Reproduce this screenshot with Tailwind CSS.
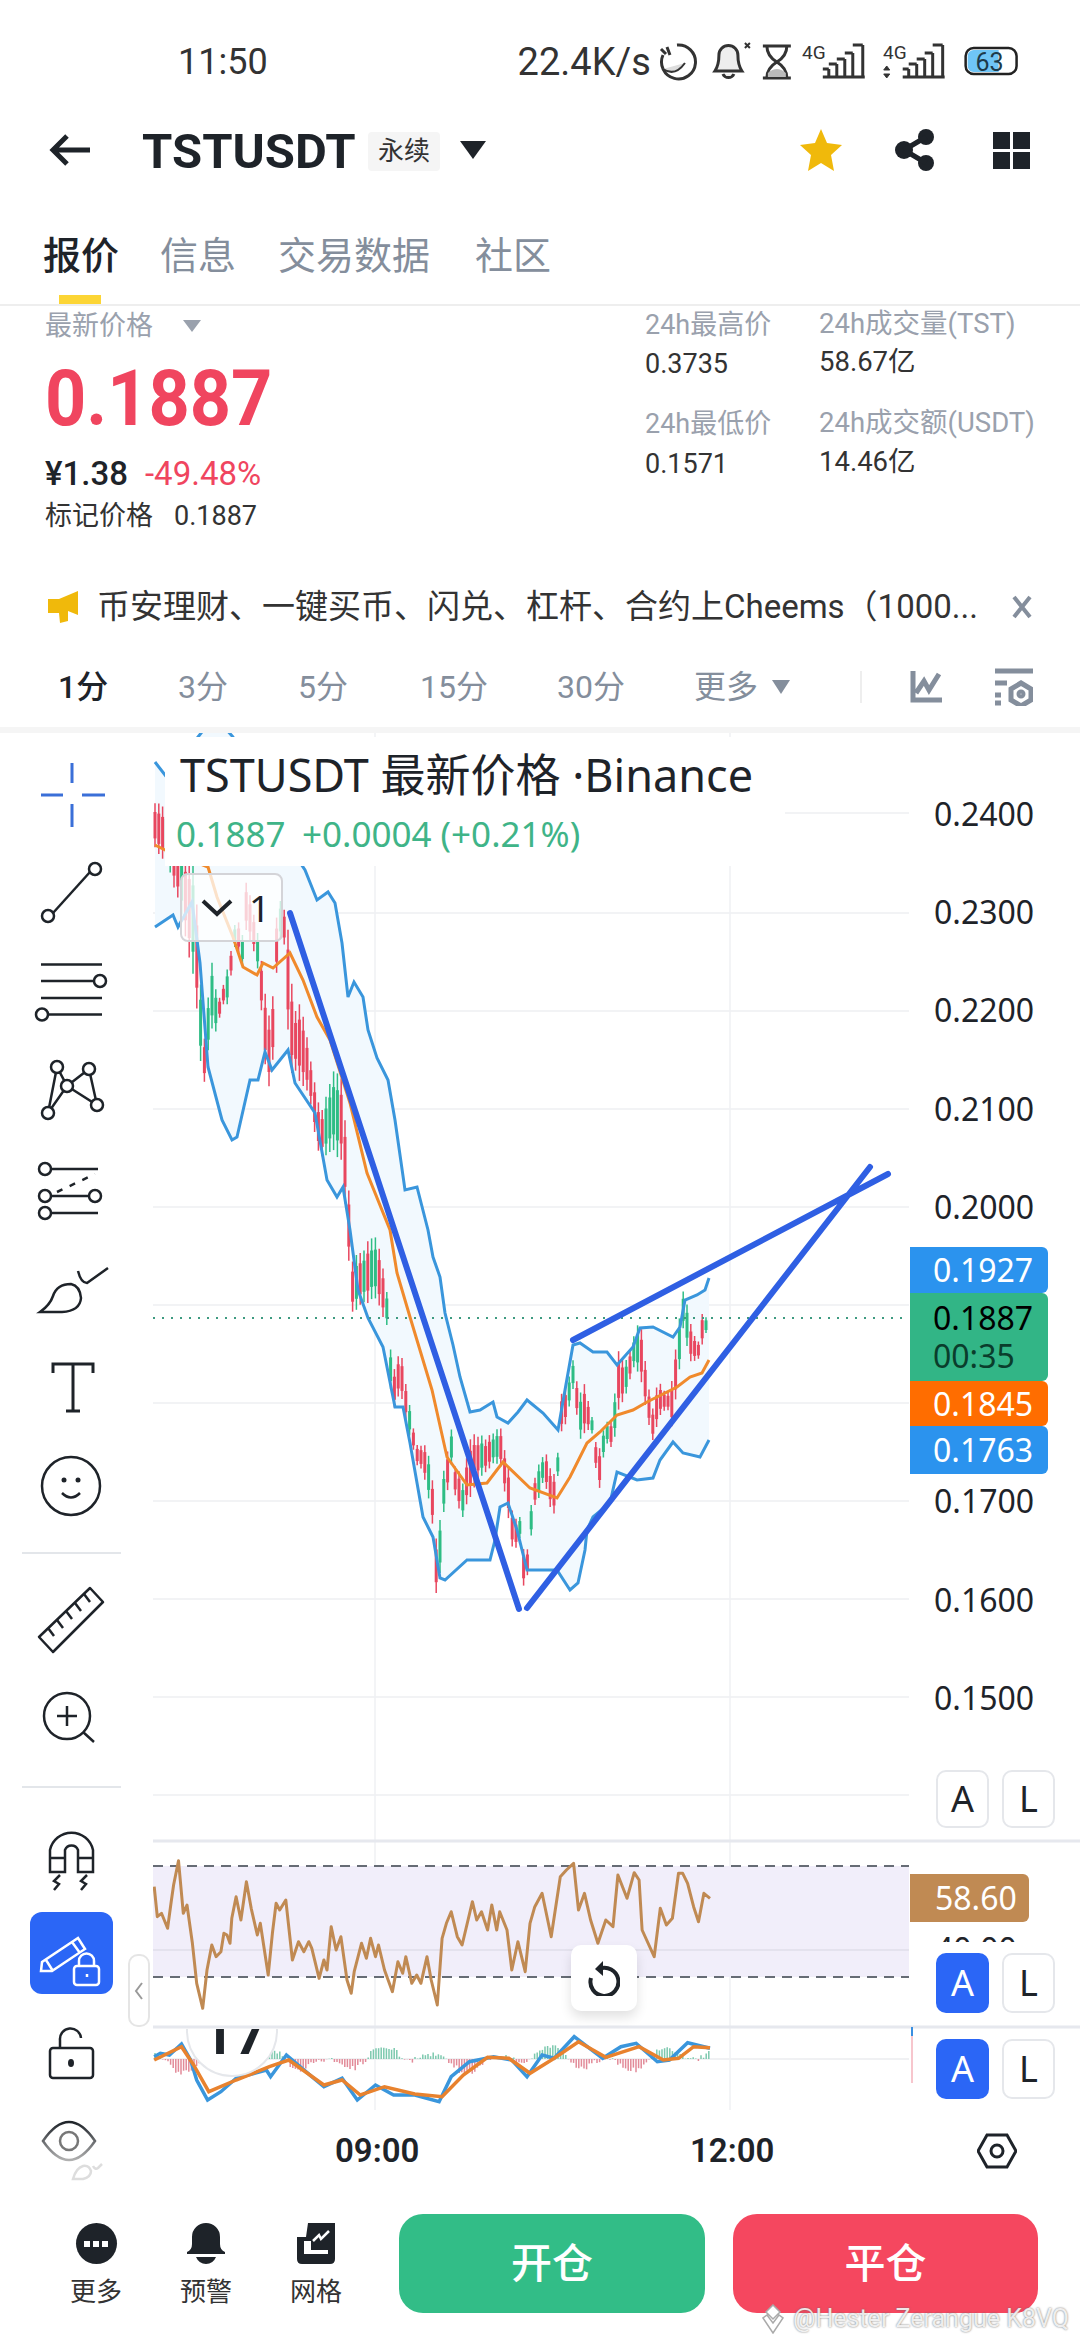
<!DOCTYPE html>
<html lang="zh-CN">

<head>
    <meta charset="UTF-8" />
    <meta name="viewport" content="width=device-width, initial-scale=1.0" />
    <title>TSTUSDT</title>
    <script src="https://cdn.jsdelivr.net/npm/@tailwindcss/browser@4"></script>
</head>

<body class="bg-white">
    <div class="relative w-[1080px] h-[2340px] overflow-hidden bg-white text-[#1e2329] font-[Roboto,Noto_Sans_CJK_SC,sans-serif]">

        <!-- status bar -->
        <div class="relative h-[124px] flex items-center pl-[178px] pr-[61px] text-[#333]">
            <span class="text-[36px] w-[340px]">11:50</span>
            <span class="text-[38px] w-[142px]">22.4K/s</span>
            <svg width="360" height="50" viewBox="660 38 360 50" fill="none" stroke="#333" stroke-width="3">
                <path d="M678 46a17 17 0 1 1-14 10M668 48l3 8M662 50l5 5" />
                <path d="M664 70q12 8 22-6" fill="#ddd" stroke-width="2" />
                <path d="M716 72q4-6 4-16a9 9 0 0 1 19 0q0 10 4 16z M724 75a6 6 0 0 0 11 0" fill="#eee" />
                <path d="M746 44l5 5m0-5l-5 5" stroke-width="2" />
                <path d="M764 47h28M764 79h28M768 47q0 10 10 16q-10 6-10 16M788 47q0 10-10 16q10 6 10 16" />
                <path d="M769 74q9-8 18 0v4h-18z" fill="#bbb" stroke="none" />
                <path d="M824 78h42M830 78v-8M838 78v-13M846 78v-18M854 78v-24M864 78v-32M824 70h6M830 65h8M838 60h8M846 54h8M854 46h10" stroke-width="3" />
                <path d="M904 78h42M910 78v-8M918 78v-13M926 78v-18M934 78v-24M944 78v-32M904 70h6M910 65h8M918 60h8M926 54h8M934 46h10" stroke-width="3" />
                <path d="M888 67l-3 4h6zM888 79l-3-4h6z" fill="#333" stroke-width="1" />
                <rect x="967" y="49" width="51" height="26" rx="8" fill="#fff" stroke="#222" stroke-width="2.5" />
                <path d="M969 57a6 6 0 0 1 6-6h25v22h-25a6 6 0 0 1-6-6z" fill="#6fc5f6" stroke="none" />
                <text x="991" y="72" text-anchor="middle" fill="#1d3a4a" stroke="none" font-size="25" font-family="Roboto">63</text>
            </svg>
            <span class="absolute left-[802px] top-[43px] text-[19px] leading-[19px]">4G</span>
            <span class="absolute left-[883px] top-[43px] text-[19px] leading-[19px]">4G</span>
        </div>

        <!-- header -->
        <div class="h-[52px] flex items-center pl-[49px] pr-[50px]">
            <svg width="93" height="52" viewBox="49 124 93 52" fill="none" stroke="#1e2329" stroke-width="5">
                <path d="M90 150H53M67 136l-14 14 14 14" />
            </svg>
            <span class="pt-[4px] text-[49px] leading-[52px] font-bold w-[226px]">TSTUSDT</span>
            <span class="mt-[2px] w-[72px] h-[39px] flex items-center justify-center rounded-[4px] bg-[#f5f5f5] text-[26px] text-[#333]">永续</span>
            <svg class="ml-[20px]" width="26" height="18" viewBox="0 0 26 18">
                <path d="M0 0h26l-13 18z" fill="#1e2329" />
            </svg>
            <div class="flex-1"></div>
            <svg width="42" height="42" viewBox="0 0 42 42">
                <path d="M21 0l6 14 15 2-11 10 3 16-13-8-13 8 3-16L0 16l15-2z" fill="#f0b90b" />
            </svg>
            <svg class="ml-[53px]" width="40" height="42" viewBox="0 0 40 42" fill="#1e2329">
                <circle cx="31" cy="8" r="8" />
                <circle cx="9" cy="21" r="9" />
                <circle cx="31" cy="34" r="8" />
                <path d="M9 21l22-13M9 21l22 13" stroke="#1e2329" stroke-width="5" />
            </svg>
            <div class="ml-[58px] grid grid-cols-2 gap-[3px] w-[37px] h-[37px]">
                <div class="bg-[#1e2329]"></div>
                <div class="bg-[#1e2329]"></div>
                <div class="bg-[#1e2329]"></div>
                <div class="bg-[#1e2329]"></div>
            </div>
        </div>

        <!-- tabs -->
        <div class="relative h-[130px] flex pt-[58px] pl-[43px] border-b-2 border-[#eeeeee] text-[38px] leading-[44px] text-[#848e9c]">
            <span class="w-[117px] text-[#1e2329] font-medium">报价</span>
            <span class="w-[118px]">信息</span>
            <span class="w-[197px]">交易数据</span>
            <span>社区</span>
            <div class="absolute left-[59px] bottom-0 w-[42px] h-[9px] bg-[#fcd535]"></div>
        </div>

        <!-- price stats -->
        <div class="h-[278px] flex">
            <div class="w-[645px] pl-[45px]">
                <div class="h-[40px] flex items-center text-[27px] text-[#9aa1ad]">
                    最新价格
                    <svg class="ml-[30px]" width="18" height="12" viewBox="0 0 18 12">
                        <path d="M0 0h18l-9 12z" fill="#9aa1ad" />
                    </svg>
                </div>
                <div class="mt-[17px] h-[72px] leading-[72px] text-[72px] font-bold text-[#f0455f] origin-left scale-y-[1.08]">0.1887</div>
                <div class="mt-[19px] h-[40px] flex items-center text-[33px]">
                    <span class="w-[100px] font-medium">¥1.38</span>
                    <span class="text-[#f0455f]">-49.48%</span>
                </div>
                <div class="mt-[2px] h-[40px] flex items-center text-[27px] text-[#333]">
                    <span class="w-[129px]">标记价格</span>
                    <span>0.1887</span>
                </div>
            </div>
            <div class="w-[174px] text-[27px] leading-[36px]">
                <div class="mt-[1px] text-[#9aa1ad]">24h最高价</div>
                <div class="mt-[3px] text-[#333]">0.3735</div>
                <div class="mt-[24px] text-[#9aa1ad]">24h最低价</div>
                <div class="mt-[4px] text-[#333]">0.1571</div>
            </div>
            <div class="text-[27.5px] leading-[36px]">
                <div class="text-[#9aa1ad]">24h成交量(TST)</div>
                <div class="mt-[2px] text-[#333]">58.67亿</div>
                <div class="mt-[25px] text-[#9aa1ad]">24h成交额(USDT)</div>
                <div class="mt-[3px] text-[#333]">14.46亿</div>
            </div>
        </div>

        <!-- announcement -->
        <div class="h-[46px] flex items-center pl-[48px]">
            <svg width="30" height="32" viewBox="0 0 30 32">
                <path d="M0 8h11L30 0v24L20 20v10l-8 2-1-10H0z" fill="#f0b90b" />
            </svg>
            <span class="ml-[19px] w-[881px] whitespace-nowrap text-[33px] text-[#333]">币安理财、一键买币、闪兑、杠杆、合约上Cheems（1000...</span>
            <svg class="ml-[34px]" width="20" height="24" viewBox="0 0 20 24" fill="none" stroke="#848e9c" stroke-width="4">
                <path d="M2 2l16 20M18 2L2 22" />
            </svg>
        </div>

        <!-- intervals -->
        <div class="h-[81px] mt-[16px] flex items-center pl-[58px] text-[32px] text-[#848e9c]">
            <span class="w-[120px] text-[#1e2329] font-medium">1分</span>
            <span class="w-[120px]">3分</span>
            <span class="w-[122px]">5分</span>
            <span class="w-[137px]">15分</span>
            <span class="w-[137px]">30分</span>
            <span class="w-[78px]">更多</span>
            <svg width="18" height="14" viewBox="0 0 18 14">
                <path d="M0 0h18l-9 14z" fill="#848e9c" />
            </svg>
            <div class="ml-[70px] w-[2px] h-[32px] bg-[#eeeeee]"></div>
            <svg class="ml-[48px]" width="32" height="32" viewBox="0 0 32 32" fill="none" stroke="#848e9c" stroke-width="5">
                <path d="M3 0v29h29M6 22l8-12 5 9 10-16" />
            </svg>
            <svg class="ml-[53px]" width="38" height="38" viewBox="0 0 38 38" fill="none" stroke="#848e9c" stroke-width="5">
                <path d="M0 3h38M0 15h12M0 27h6M0 35h6" />
                <path d="M26 15l10 6v11l-10 6-10-6V21z" />
                <circle cx="26" cy="26" r="2" />
            </svg>
        </div>
        <div class="h-[6px] bg-[#f5f5f5]"></div>

        <!-- chart row -->
        <div class="relative h-[1457px] flex">
            <div class="w-[153px] pt-[13px] pl-[22px] shrink-0">
                <!-- each icon is drawn in page coordinates, the viewBox is its own row -->
                <svg class="block" width="100" height="98" viewBox="22 746 100 98" fill="none" stroke="#3a6fd8" stroke-width="3">
                    <path d="M41 795h22M82 795h23M72 763v20M72 804v23" />
                </svg>
                <svg class="block" width="100" height="98" viewBox="22 844 100 98" fill="none" stroke="#1e2329" stroke-width="2.5">
                    <path d="M53 913l37-41" />
                    <ellipse cx="48" cy="916" rx="6" ry="6" fill="#fff" />
                    <ellipse cx="95" cy="869" rx="6" ry="6" fill="#fff" />
                </svg>
                <svg class="block" width="100" height="98" viewBox="22 942 100 98" fill="none" stroke="#1e2329" stroke-width="2.5">
                    <path d="M41 964.5h61M41 981h53M41 998h61M48 1014.5h54" />
                    <circle cx="100" cy="981" r="6" fill="#fff" />
                    <circle cx="42" cy="1014.5" r="6" fill="#fff" />
                </svg>
                <svg class="block" width="100" height="98" viewBox="22 1040 100 98" fill="none" stroke="#1e2329" stroke-width="2.5">
                    <path d="M48 1113l9-46 10 19-19 27M67 1086l22-17 8 36z" />
                    <circle cx="57" cy="1067" r="6" fill="#fff" />
                    <circle cx="89" cy="1069" r="6" fill="#fff" />
                    <circle cx="67" cy="1086" r="6" fill="#fff" />
                    <circle cx="48" cy="1113" r="6" fill="#fff" />
                    <circle cx="97" cy="1105" r="6" fill="#fff" />
                </svg>
                <svg class="block" width="100" height="98" viewBox="22 1138 100 98" fill="none" stroke="#1e2329" stroke-width="2.5">
                    <path d="M51 1169h47M51 1196h38M51 1213h47" />
                    <path d="M57 1192l38-18" stroke-dasharray="6 8" />
                    <circle cx="45" cy="1169" r="6" fill="#fff" />
                    <circle cx="45" cy="1196" r="6" fill="#fff" />
                    <circle cx="95" cy="1196" r="6" fill="#fff" />
                    <circle cx="45" cy="1213" r="6" fill="#fff" />
                </svg>
                <svg class="block" width="100" height="98" viewBox="22 1236 100 98" fill="none" stroke="#1e2329" stroke-width="2.5">
                    <path d="M40 1312h22q18-1 19-14-1-12-10-14-14 0-18 12-3 9-13 16z" />
                    <path d="M78 1271q3 12 9 12l21-15" />
                </svg>
                <svg class="block" width="100" height="98" viewBox="22 1334 100 98" fill="none" stroke="#1e2329" stroke-width="3">
                    <path d="M53 1373v-9h40v9M73 1364v47M66 1411h14" />
                </svg>
                <svg class="block" width="100" height="98" viewBox="22 1432 100 98" fill="none" stroke="#1e2329" stroke-width="2.5">
                    <circle cx="71" cy="1486" r="29" />
                    <circle cx="64" cy="1480" r="2.5" fill="#1e2329" stroke="none" />
                    <circle cx="78" cy="1480" r="2.5" fill="#1e2329" stroke="none" />
                    <path d="M62 1493q9 9 18 0" />
                </svg>
                <div class="mt-[22px] w-[99px] h-[2px] bg-[#e3e6ea]"></div>
                <svg class="block" width="100" height="116" viewBox="22 1554 100 116" fill="none" stroke="#1e2329" stroke-width="2.5" stroke-linejoin="round">
                    <path d="M39 1637l51-49 13 14-50 50z" />
                    <path d="M48 1628l6 8M57 1620l6 8M66 1611l6 8M75 1603l6 8M84 1594l6 8" />
                </svg>
                <svg class="block" width="100" height="116" viewBox="22 1670 100 116" fill="none" stroke="#1e2329" stroke-width="2.5">
                    <circle cx="67" cy="1716" r="23" />
                    <path d="M83 1732l11 10M57 1716h20M67 1706v20" />
                </svg>
                <div class="w-[99px] h-[2px] bg-[#e3e6ea]"></div>
                <svg class="block" width="100" height="118" viewBox="22 1788 100 118" fill="none" stroke="#1e2329" stroke-width="2.5">
                    <path d="M50 1872v-22a22 22 0 0 1 43 0v22H78v-22a7 7 0 0 0-13 0v22zM50 1858h15M78 1858h15" />
                    <path d="M60 1875l-6 6 5 3-5 6M87 1875l-6 6 5 3-5 6" />
                </svg>
                <div class="mt-[6px] ml-[8px] w-[83px] h-[82px] rounded-[12px] bg-[#2b66f6]">
                    <svg width="83" height="82" viewBox="30 1912 83 82" fill="none" stroke="#fff" stroke-width="2.5">
                        <path d="M42 1962l-1 9 11 0 33-22-7-11zM46 1960l7 11M72 1942l8 11" />
                        <rect x="74" y="1966" width="25" height="19" rx="3" fill="#2b66f6" />
                        <path d="M79 1966v-5a7 7 0 0 1 15 0v5M87 1974v3" />
                    </svg>
                </div>
                <svg class="block mt-[6px]" width="100" height="100" viewBox="22 2000 100 100" fill="none" stroke="#1e2329" stroke-width="2.5">
                    <rect x="50" y="2048" width="43" height="30" rx="3" />
                    <path d="M60 2048v-8a10 10 0 0 1 21 -2" />
                    <ellipse cx="71" cy="2063" rx="3" ry="4" fill="#1e2329" stroke="none" />
                </svg>
                <svg class="block" width="100" height="85" viewBox="22 2100 100 85" fill="none" stroke-width="2.5">
                    <defs>
                        <linearGradient id="eyeFade" x1="0" y1="0" x2="0" y2="1">
                            <stop offset="0" stop-color="#1e2329" />
                            <stop offset="1" stop-color="#b0b0b0" />
                        </linearGradient>
                    </defs>
                    <path d="M43 2141q26-38 52 0q-26 38-52 0z" stroke="url(#eyeFade)" />
                    <circle cx="69" cy="2141" r="9" stroke="#777" />
                    <path d="M73 2179h10q8-2 8-8-2-6-8-5-7 2-10 13zM93 2166q2 4 5 2l4-4" stroke="#ddd" />
                </svg>
            </div>

            <div class="relative flex-1 overflow-hidden">
                <svg id="chart" class="absolute inset-0" width="927" height="1457" viewBox="153 733 927 1457" fill="none">
                    <defs>
                        <clipPath id="mainClip"><rect x="153" y="733" width="756" height="1108" /></clipPath>
                        <clipPath id="rsiClip"><rect x="153" y="1843" width="756" height="183" /></clipPath>
                    </defs>
                    <path d="M153 813H909M153 913H909M153 1011H909M153 1109H909M153 1207H909M153 1305H909M153 1403H909M153 1501H909M153 1599H909M153 1697H909M153 1795H909" stroke="#f2f3f5" stroke-width="2" />
                    <path d="M375 733V2110M730 733V2110" stroke="#f0f1f4" stroke-width="1.5" />
                    <g id="mainLayer" clip-path="url(#mainClip)"></g>
                    <path d="M153 1318H909" stroke="#3d9a80" stroke-width="2" stroke-dasharray="2 7" />
                    <path d="M290 913L519 1609M527 1608L870 1167M573 1340L888 1174" stroke="#2f5fe3" stroke-width="6" stroke-linecap="round" />
                    <rect x="153" y="1866" width="756" height="111" fill="#f1eefa" />
                    <path d="M153 1950H909" stroke="#e4e2ee" stroke-width="2" />
                    <path d="M153 1866H909M153 1977H909" stroke="#666c75" stroke-width="2" stroke-dasharray="10 7" />
                    <path d="M153 1841H1080M153 2027H1080" stroke="#e6e8ee" stroke-width="3" />
                    <path d="M153 2059H909" stroke="#f0f1f3" stroke-width="2" />
                    <g id="rsiLayer" clip-path="url(#rsiClip)"></g>
                    <g id="macdLayer"></g>
                    <path d="M912 2027V2036" stroke="#3a8fe0" stroke-width="2" />
                    <path d="M912 2036V2083" stroke="#f7c6cd" stroke-width="2" />
                </svg>

                <!-- legend -->
                <div class="absolute left-[12px] top-[4px] w-[620px] h-[129px] bg-white font-['Noto_Sans',Noto_Sans_CJK_SC,sans-serif]">
                    <div class="pl-[15px] pt-[7px] text-[45px] leading-[62px] whitespace-nowrap">TSTUSDT 最新价格 ·Binance</div>
                    <div class="pl-[11px] pt-[5px] flex text-[35px] leading-[46px] text-[#3fb488] whitespace-nowrap">
                        <span class="w-[126px]">0.1887</span>
                        <span>+0.0004 (+0.21%)</span>
                    </div>
                </div>
                <div class="absolute left-[27px] top-[140px] w-[103px] h-[69px] flex items-center pl-[19px] rounded-[8px] border-2 border-[#d4d4d8] bg-white/75 font-['Noto_Sans',sans-serif]">
                    <svg width="32" height="18" viewBox="0 0 32 18" fill="none" stroke="#1e2329" stroke-width="4">
                        <path d="M2 2l14 13L30 2" />
                    </svg>
                    <span class="ml-[16px] text-[37px]">1</span>
                </div>

                <!-- price axis, 0.1900 and 0.1800 sit behind the tags -->
                <div class="absolute left-[781px] top-[32px] flex flex-col text-[32px] font-['Noto_Sans',sans-serif]">
                    <span class="h-[98.2px] leading-[98.2px]">0.2400</span>
                    <span class="h-[98.2px] leading-[98.2px]">0.2300</span>
                    <span class="h-[98.2px] leading-[98.2px]">0.2200</span>
                    <span class="h-[98.2px] leading-[98.2px]">0.2100</span>
                    <span class="h-[98.2px] leading-[98.2px]">0.2000</span>
                    <span class="h-[98.2px]"></span>
                    <span class="h-[98.2px]"></span>
                    <span class="h-[98.2px] leading-[98.2px]">0.1700</span>
                    <span class="h-[98.2px] leading-[98.2px]">0.1600</span>
                    <span class="h-[98.2px] leading-[98.2px]">0.1500</span>
                </div>

                <!-- price tags -->
                <div class="absolute left-[757px] top-[514px] w-[138px] flex flex-col text-[32px] leading-[38px] font-['Noto_Sans',sans-serif]">
                    <div class="h-[46px] pl-[23px] flex items-center rounded-r-[6px] bg-[#2b93ee] text-white">0.1927</div>
                    <div class="h-[88px] pl-[23px] flex flex-col justify-center rounded-r-[6px] bg-[#32b586] text-black">
                        <span>0.1887</span>
                        <span class="text-[#0a3d2c]">00:35</span>
                    </div>
                    <div class="h-[45px] pl-[23px] flex items-center rounded-r-[6px] bg-[#ff6d00] text-white">0.1845</div>
                    <div class="h-[48px] pl-[23px] flex items-center rounded-r-[6px] bg-[#2b93ee] text-white">0.1763</div>
                </div>

                <!-- auto / log buttons -->
                <div class="absolute left-[783px] top-[1037px] flex gap-[13px] text-[36px] font-['Noto_Sans',sans-serif]">
                    <span class="w-[53px] h-[58px] flex items-center justify-center rounded-[10px] border-2 border-[#e5e7eb] bg-white">A</span>
                    <span class="w-[53px] h-[58px] flex items-center justify-center rounded-[10px] border-2 border-[#e5e7eb] bg-white">L</span>
                </div>
                <div class="absolute left-[757px] top-[1141px] w-[119px] h-[48px] pl-[25px] flex items-center rounded-r-[6px] bg-[#c08a53] text-white text-[32px] font-['Noto_Sans',sans-serif]">58.60</div>
                <div class="absolute left-[782px] top-[1204px] h-[5px] overflow-hidden text-[32px] leading-[32px] font-['Noto_Sans',sans-serif]">
                    <div class="-mt-[4px]">40.00</div>
                </div>
                <div class="absolute left-[783px] top-[1220px] flex gap-[13px] text-[36px] font-['Noto_Sans',sans-serif]">
                    <span class="w-[53px] h-[60px] flex items-center justify-center rounded-[10px] bg-[#2b66f6] text-white">A</span>
                    <span class="w-[53px] h-[60px] flex items-center justify-center rounded-[10px] border-2 border-[#e5e7eb] bg-white">L</span>
                </div>
                <div class="absolute left-[783px] top-[1306px] flex gap-[13px] text-[36px] font-['Noto_Sans',sans-serif]">
                    <span class="w-[53px] h-[60px] flex items-center justify-center rounded-[10px] bg-[#2b66f6] text-white">A</span>
                    <span class="w-[53px] h-[60px] flex items-center justify-center rounded-[10px] border-2 border-[#e5e7eb] bg-white">L</span>
                </div>

                <!-- reset button -->
                <div class="absolute left-[418px] top-[1212px] w-[66px] h-[66px] flex items-center justify-center rounded-[10px] bg-white shadow-[0_6px_12px_rgba(0,0,0,0.12)]">
                    <svg width="32" height="36" viewBox="0 0 32 36" fill="none" stroke="#1e2329" stroke-width="4">
                        <path d="M11 9a14 14 0 1 1-8 9" />
                        <path d="M15 1L7 9l8 7z" fill="#1e2329" stroke="none" />
                    </svg>
                </div>

                <!-- round badge cut by the pane edge -->
                <div class="absolute left-[33px] top-[1296px] w-[92px] h-[48px] overflow-hidden">
                    <div class="relative -mt-[44px] w-[92px] h-[92px] rounded-full border-2 border-[#e5e7eb] bg-white">
                        <span class="absolute left-[14px] bottom-[12px] text-[56px] leading-[56px] font-bold">17</span>
                    </div>
                </div>

                <!-- time axis -->
                <span class="absolute left-[182px] top-[1398px] w-[80px] text-center text-[33px] leading-[40px] font-semibold">09:00</span>
                <span class="absolute left-[537px] top-[1398px] w-[80px] text-center text-[33px] leading-[40px] font-semibold">12:00</span>
                <svg class="absolute left-[824px] top-[1400px]" width="40" height="36" viewBox="0 0 40 36" fill="none" stroke="#1e2329" stroke-width="3">
                    <path d="M10 2h20l9 16-9 16H10L1 18z" />
                    <circle cx="20" cy="18" r="6" />
                </svg>
            </div>

            <!-- collapse handle -->
            <div class="absolute left-[128px] top-[1221px] w-[22px] h-[73px] flex items-center justify-center rounded-[10px] border-2 border-[#e5e5e5] bg-white">
                <svg width="10" height="20" viewBox="0 0 10 20" fill="none" stroke="#9a9a9a" stroke-width="2">
                    <path d="M8 2L2 10l6 8" />
                </svg>
            </div>
        </div>

        <!-- bottom bar -->
        <div class="h-[150px] flex pl-[41px] pt-[24px]">
            <div class="w-[110px] flex flex-col items-center pt-[9px] text-[26px] text-[#333]">
                <div class="w-[41px] h-[41px] flex items-center justify-center gap-[3px] rounded-full bg-[#1e2329]">
                    <div class="w-[6px] h-[6px] bg-white"></div>
                    <div class="w-[6px] h-[6px] bg-white"></div>
                    <div class="w-[6px] h-[6px] bg-white"></div>
                </div>
                <span class="mt-[9px]">更多</span>
            </div>
            <div class="w-[110px] flex flex-col items-center pt-[9px] text-[26px] text-[#333]">
                <svg width="40" height="41" viewBox="0 0 40 41" fill="#1e2329">
                    <path d="M1 29q5-2 5-8V14a14 14 0 0 1 28 0v7q0 6 5 8v2H1z" />
                    <path d="M10 34h20q-3 7-10 7t-10-7z" />
                </svg>
                <span class="mt-[9px]">预警</span>
            </div>
            <div class="w-[110px] flex flex-col items-center pt-[9px] text-[26px] text-[#333]">
                <svg width="38" height="41" viewBox="0 0 38 41" fill="#1e2329">
                    <path d="M11 0h27v36q0 5-5 5H5q-5 0-5-5V14h9z" />
                    <path d="M7 18h7v9h17v4H7z" fill="#fff" />
                    <path d="M16 18l6-6 2 4 8-8" stroke="#fff" stroke-width="2.5" fill="none" />
                </svg>
                <span class="mt-[9px]">网格</span>
            </div>
            <div class="ml-[28px] w-[306px] h-[99px] pt-[3px] flex items-center justify-center rounded-[24px] bg-[#32bd87] text-white text-[41px] font-medium">开仓</div>
            <div class="ml-[28px] w-[305px] h-[99px] pt-[3px] flex items-center justify-center rounded-[24px] bg-[#f5475f] text-white text-[41px] font-medium">平仓</div>
        </div>

        <!-- watermark -->
        <div class="absolute left-[760px] top-[2300px] flex items-center text-[25px] text-white/85 [text-shadow:0_0_2px_#666] whitespace-nowrap">
            <svg width="26" height="30" viewBox="0 0 26 30" fill="none" stroke="#aaa" stroke-width="1.5">
                <path d="M13 1l7 7-7 7-7-7zM3 14l10 15 10-15-4-3-6 8-6-8z" fill="#fff" />
            </svg>
            <span class="ml-[7px]">@Hester Zerangue K8VQ</span>
        </div>
    </div>

    <script>
        // measured off the picture, in page pixels
        const upper = [[155, 762], [165, 775], [180, 760], [198, 737], [205, 728], [225, 728], [233, 737], [245, 770], [260, 800], [285, 840], [305, 870], [317, 900], [328, 892], [335, 903], [342, 943], [348, 997], [354, 982], [363, 997], [368, 1030], [377, 1058], [388, 1080], [395, 1120], [405, 1190], [417, 1187], [428, 1230], [433, 1257], [440, 1277], [445, 1313], [453, 1345], [460, 1377], [470, 1412], [480, 1410], [493, 1402], [497, 1417], [508, 1423], [518, 1412], [527, 1400], [543, 1413], [558, 1430], [565, 1390], [573, 1345], [580, 1343], [593, 1352], [607, 1352], [617, 1365], [633, 1347], [640, 1328], [653, 1327], [673, 1337], [680, 1327], [685, 1300], [697, 1295], [705, 1290], [709, 1278]];
        const lower = [[155, 927], [173, 915], [178, 927], [192, 902], [200, 963], [208, 1067], [222, 1120], [232, 1140], [237, 1137], [250, 1080], [258, 1080], [265, 1052], [272, 1070], [288, 1050], [295, 1083], [315, 1113], [327, 1180], [337, 1197], [343, 1187], [350, 1230], [358, 1290], [368, 1318], [383, 1347], [395, 1407], [403, 1407], [410, 1443], [423, 1517], [433, 1537], [440, 1578], [445, 1580], [467, 1560], [490, 1560], [495, 1540], [500, 1507], [508, 1503], [517, 1530], [527, 1570], [557, 1570], [570, 1590], [578, 1583], [585, 1550], [587, 1530], [593, 1517], [610, 1503], [617, 1472], [637, 1480], [653, 1478], [660, 1460], [673, 1442], [683, 1453], [700, 1457], [709, 1440]];
        const avg = [[155, 845], [165, 850], [208, 867], [217, 897], [233, 937], [243, 967], [257, 975], [263, 963], [273, 968], [290, 953], [303, 980], [317, 1017], [330, 1040], [350, 1103], [367, 1173], [390, 1230], [397, 1273], [410, 1317], [432, 1390], [447, 1457], [467, 1485], [487, 1483], [503, 1462], [530, 1488], [557, 1498], [570, 1477], [587, 1443], [600, 1432], [617, 1415], [633, 1410], [647, 1402], [677, 1387], [690, 1377], [702, 1373], [709, 1360]];
        const candles = [[155, 805, 850], [165, 805, 860], [178, 840, 900], [195, 867, 987], [200, 963, 1057], [203, 1057, 1097], [208, 997, 1055], [212, 963, 1030], [217, 997, 1033], [222, 993, 1007], [227, 968, 1007], [233, 937, 957], [237, 913, 943], [242, 943, 973], [245, 873, 930], [257, 930, 960], [262, 963, 1017], [267, 1013, 1093], [272, 1013, 1080], [275, 943, 1013], [278, 897, 943], [285, 913, 943], [290, 943, 1090], [293, 1013, 1063], [300, 1003, 1087], [305, 1023, 1087], [310, 1057, 1097], [317, 1097, 1153], [323, 1110, 1157], [333, 1070, 1153], [342, 1080, 1163], [347, 1147, 1230], [352, 1260, 1313], [377, 1233, 1297], [388, 1297, 1333], [392, 1380, 1417], [400, 1347, 1393], [410, 1407, 1437], [417, 1443, 1463], [427, 1447, 1487], [435, 1497, 1547], [437, 1563, 1627], [443, 1473, 1520], [452, 1427, 1463], [455, 1463, 1497], [463, 1480, 1520], [472, 1430, 1490], [483, 1437, 1473], [493, 1433, 1463], [500, 1423, 1463], [508, 1463, 1517], [513, 1517, 1553], [520, 1517, 1540], [525, 1560, 1603], [528, 1547, 1573], [533, 1480, 1513], [545, 1447, 1480], [553, 1477, 1523], [557, 1467, 1493], [560, 1400, 1437], [568, 1377, 1417], [575, 1353, 1377], [578, 1400, 1440], [585, 1383, 1433], [593, 1423, 1433], [598, 1453, 1500], [605, 1420, 1443], [613, 1417, 1453], [618, 1347, 1410], [627, 1363, 1393], [633, 1337, 1370], [640, 1317, 1377], [647, 1377, 1420], [653, 1410, 1440], [658, 1380, 1420], [667, 1390, 1410], [672, 1380, 1427], [678, 1330, 1387], [683, 1287, 1330], [690, 1320, 1360], [698, 1343, 1363], [703, 1310, 1340], [708, 1317, 1333]];
        // these three were read off a crop with x scaled 1.65 and y scaled 3
        const rsiRaw = [[40, 200], [45, 290], [52, 280], [62, 325], [68, 245], [72, 195], [80, 122], [88, 280], [94, 255], [103, 370], [110, 490], [120, 565], [127, 450], [135, 375], [142, 410], [150, 395], [155, 340], [160, 345], [165, 370], [168, 295], [175, 230], [183, 300], [192, 185], [200, 265], [210, 345], [215, 310], [228, 465], [235, 340], [241, 250], [247, 270], [257, 240], [268, 420], [278, 365], [287, 395], [295, 365], [300, 385], [312, 475], [320, 420], [325, 450], [332, 320], [340, 390], [348, 350], [358, 480], [365, 520], [370, 455], [382, 370], [390, 415], [397, 355], [405, 410], [410, 375], [420, 450], [433, 515], [442, 425], [450, 460], [455, 410], [465, 490], [473, 465], [480, 490], [490, 410], [497, 480], [507, 555], [515, 355], [522, 310], [530, 275], [540, 350], [548, 375], [565, 245], [572, 300], [580, 275], [590, 330], [597, 255], [605, 330], [610, 275], [622, 330], [630, 450], [640, 365], [652, 455], [660, 310], [668, 260], [680, 220], [695, 350], [710, 170], [720, 150], [732, 130], [740, 270], [750, 220], [760, 300], [772, 370], [785, 300], [797, 320], [805, 165], [820, 235], [832, 158], [840, 180], [845, 330], [865, 410], [875, 265], [885, 315], [895, 295], [905, 160], [912, 160], [920, 190], [930, 260], [938, 305], [947, 220], [957, 235]];
        const macdRaw = [[40, 710], [50, 700], [65, 705], [85, 672], [100, 720], [110, 780], [128, 840], [150, 815], [175, 775], [225, 750], [232, 770], [258, 705], [300, 770], [320, 800], [350, 775], [375, 840], [405, 795], [435, 825], [470, 825], [510, 845], [530, 770], [560, 725], [600, 710], [630, 720], [655, 770], [680, 705], [700, 715], [733, 650], [780, 715], [810, 680], [835, 670], [870, 725], [890, 720], [920, 668], [957, 685]];
        const signalRaw = [[40, 720], [85, 680], [105, 735], [130, 815], [175, 780], [230, 740], [262, 720], [320, 795], [350, 780], [380, 825], [420, 800], [470, 822], [515, 830], [550, 765], [590, 712], [625, 715], [660, 760], [700, 715], [740, 665], [785, 712], [840, 680], [880, 720], [905, 715], [930, 680], [957, 683]];

        let seed = 17;
        function rnd() {
            seed = (seed * 16807) % 2147483647;
            return seed / 2147483647;
        }

        function toPage(list) {
            return list.map(p => [130 + p[0] / 1.65, 1820 + p[1] / 3]);
        }

        function pts(list) {
            return list.map(p => p[0].toFixed(1) + "," + p[1].toFixed(1)).join(" ");
        }

        function bandAt(x) {
            let i = 0;
            while (i < candles.length - 2 && candles[i + 1][0] < x) i++;
            const a = candles[i], b = candles[i + 1];
            const t = Math.min(1, Math.max(0, (x - a[0]) / (b[0] - a[0])));
            return [a[1] + (b[1] - a[1]) * t, a[2] + (b[2] - a[2]) * t];
        }

        let main = '<polygon points="' + pts(upper.concat(lower.slice().reverse())) + '" fill="#f2f9fe" />';
        let lastMid = 0;
        for (let x = 155; x <= 709; x += 3.8) {
            const band = bandAt(x);
            const hi = band[0] + (rnd() - 0.3) * 6;
            const lo = band[1] + (rnd() - 0.7) * 6;
            const mid = (hi + lo) / 2;
            const up = rnd() < 0.5 ? mid < lastMid : rnd() < 0.5;
            const color = up ? "#2ebd85" : "#e8475f";
            const h = lo - hi;
            main += '<path d="M' + x.toFixed(1) + " " + hi.toFixed(1) + "V" + lo.toFixed(1) + '" stroke="' + color + '" stroke-width="1.5" />';
            main += '<path d="M' + x.toFixed(1) + " " + (hi + h * 0.2).toFixed(1) + "V" + (lo - h * 0.2).toFixed(1) + '" stroke="' + color + '" stroke-width="3" />';
            lastMid = mid;
        }
        main += '<polyline points="' + pts(upper) + '" stroke="#3a96dc" stroke-width="3" />';
        main += '<polyline points="' + pts(lower) + '" stroke="#3a96dc" stroke-width="3" />';
        main += '<polyline points="' + pts(avg) + '" stroke="#f08a2c" stroke-width="3" />';
        document.getElementById("mainLayer").innerHTML = main;

        document.getElementById("rsiLayer").innerHTML =
            '<polyline points="' + pts(toPage(rsiRaw)) + '" stroke="#c08a53" stroke-width="3" stroke-linejoin="round" />';

        let macd = "";
        for (let x = 155; x <= 709; x += 2.6) {
            const v = (Math.sin(x / 23) + Math.sin(x / 9)) * 7 + (rnd() - 0.5) * 6;
            const color = v < 0 ? "#7cc9ae" : "#e28a98";
            macd += '<path d="M' + x.toFixed(1) + " 2059V" + (2059 + v).toFixed(1) + '" stroke="' + color + '" stroke-width="1.5" />';
        }
        macd += '<polyline points="' + pts(toPage(macdRaw)) + '" stroke="#3a96dc" stroke-width="3.5" />';
        macd += '<polyline points="' + pts(toPage(signalRaw)) + '" stroke="#e8822e" stroke-width="3.5" />';
        document.getElementById("macdLayer").innerHTML = macd;
    </script>
</body>

</html>
